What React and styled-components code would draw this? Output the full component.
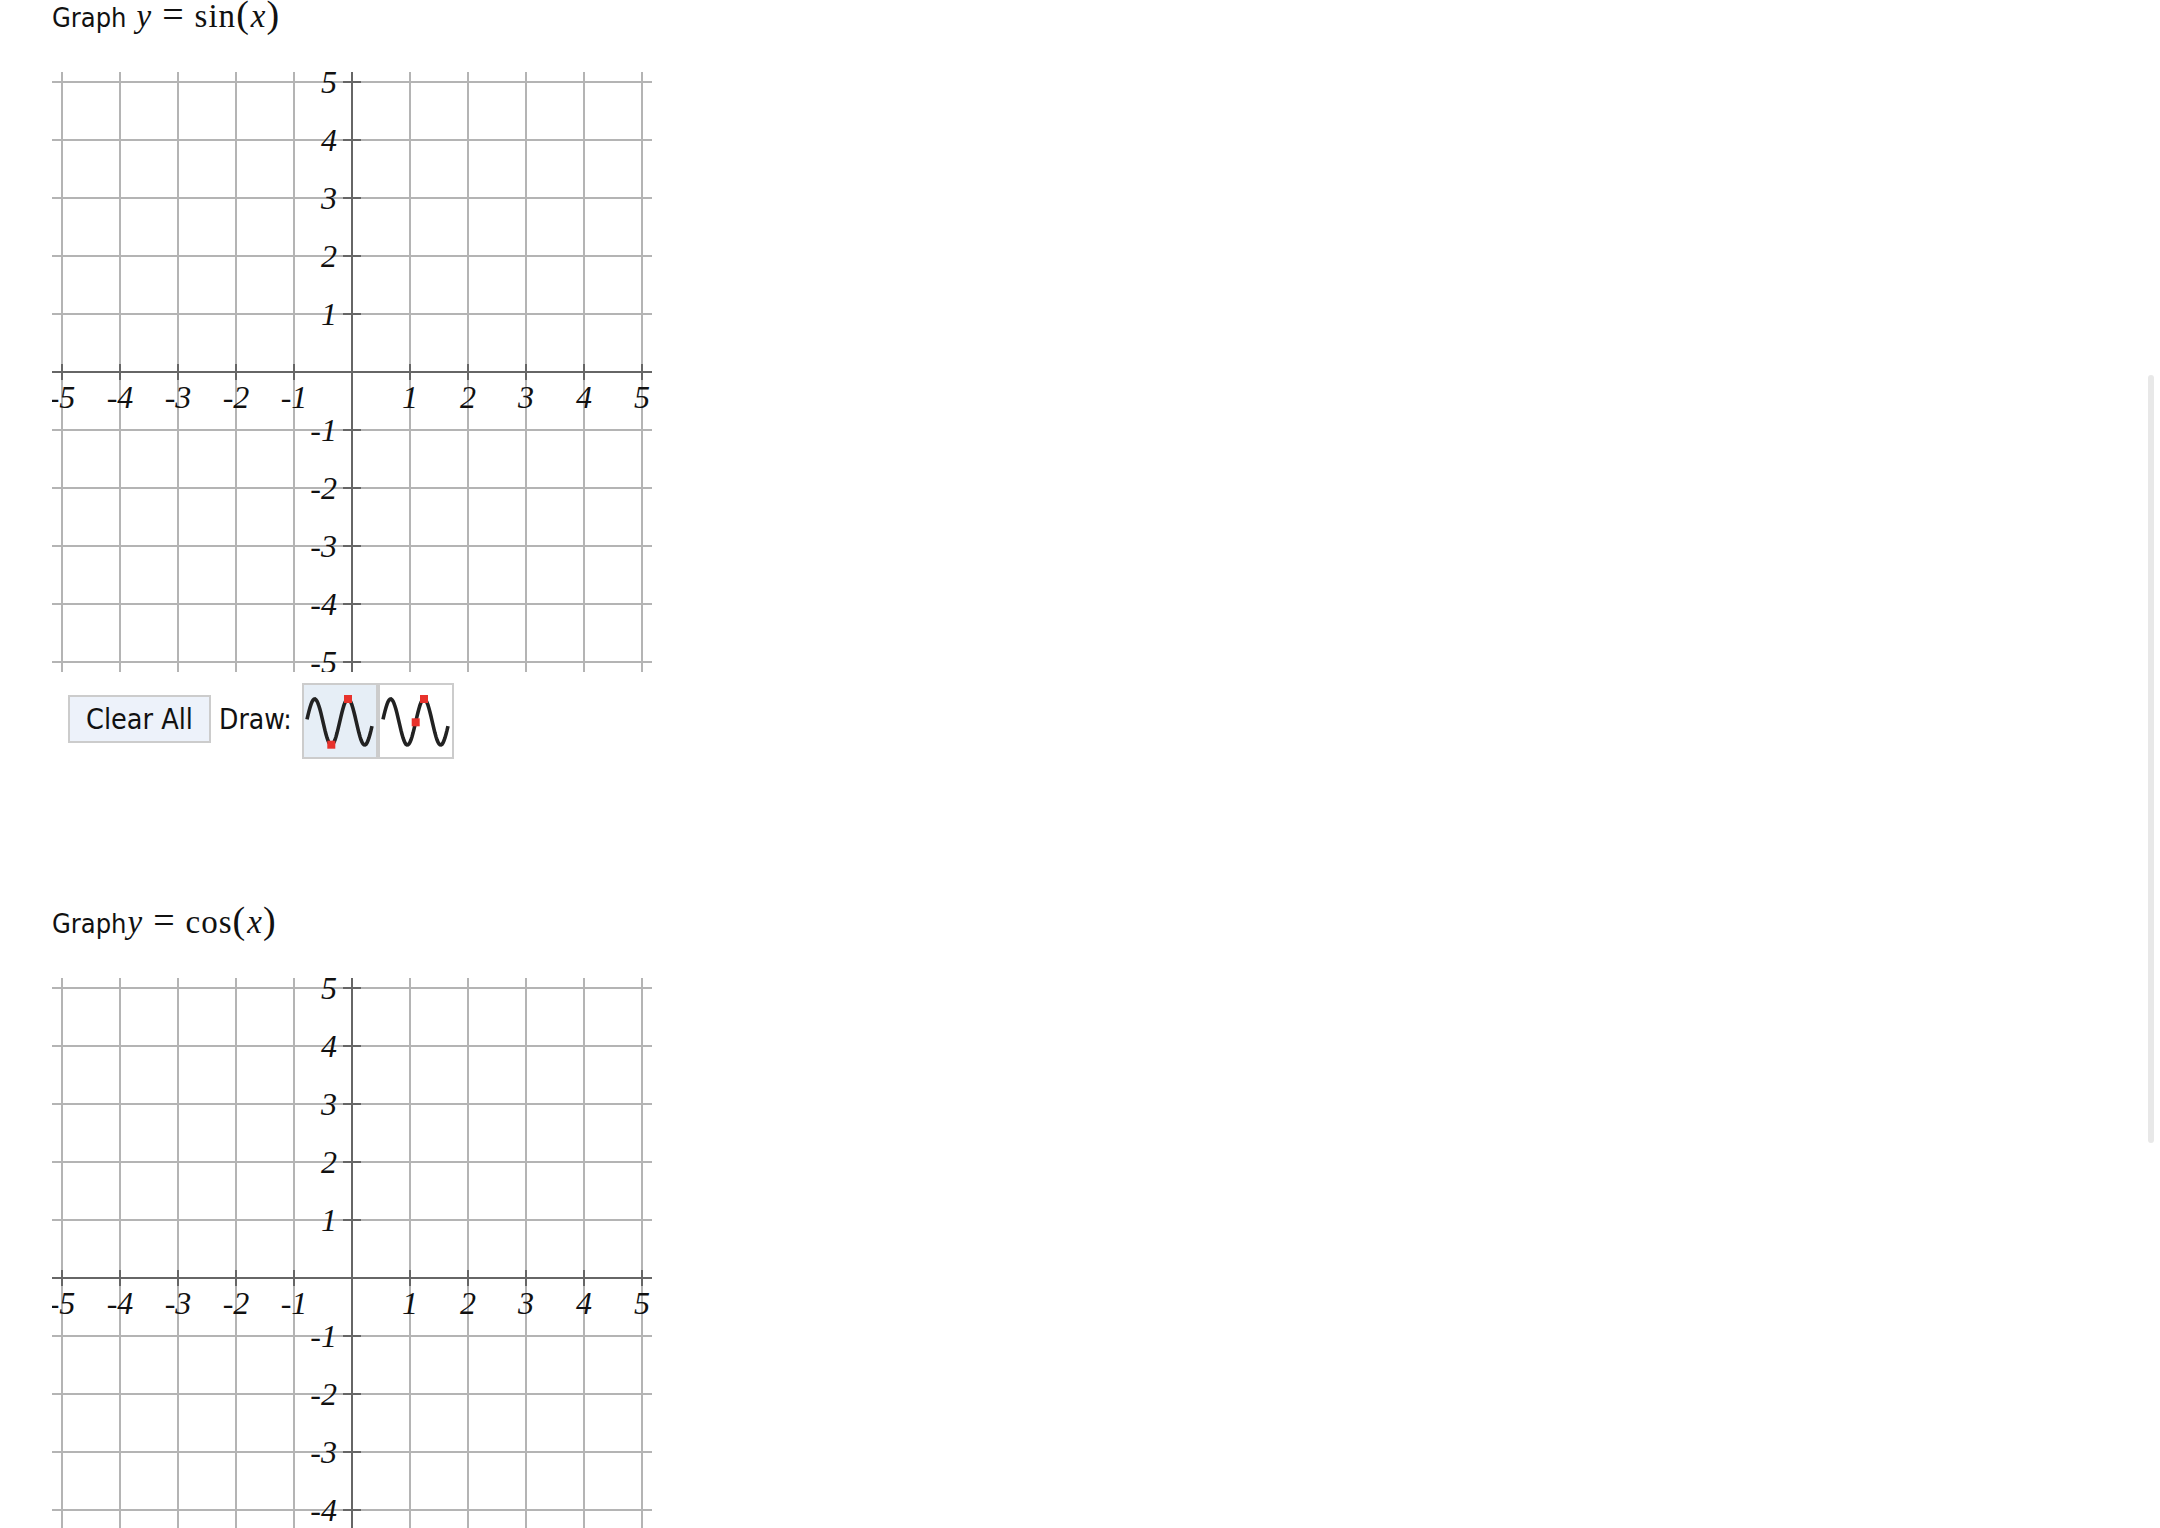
import React from 'react'
import styled, { createGlobalStyle } from 'styled-components'

const GlobalStyle = createGlobalStyle`
  html, body {
    margin: 0;
    height: 100%;
    overflow: hidden;
    background: #fff;
  }
`

const UNIT = 58
const ORIGIN = 300
const STEPS = [-5, -4, -3, -2, -1, 0, 1, 2, 3, 4, 5]
const TICKS = STEPS.filter((n) => n !== 0)

const buildWave = () => {
  const points = []
  for (let x = 5; x <= 70; x += 1) {
    const y = 39 - 23 * Math.cos((2 * Math.PI * (x - 12.7)) / 33.3)
    points.push(`${x},${y.toFixed(1)}`)
  }
  return points.join(' ')
}
const WAVE = buildWave()

const Graph = () => (
  <Plot width="600" height="600" viewBox="0 0 600 600">
    {STEPS.map((n) => {
      const pos = ORIGIN + n * UNIT
      if (n === 0) return null
      return (
        <g key={n}>
          <GridLine x1={pos} y1="0" x2={pos} y2="600" />
          <GridLine x1="0" y1={pos} x2="600" y2={pos} />
        </g>
      )
    })}
    <AxisLine x1="0" y1={ORIGIN} x2="600" y2={ORIGIN} />
    <AxisLine x1={ORIGIN} y1="0" x2={ORIGIN} y2="600" />
    {TICKS.map((n) => {
      const pos = ORIGIN + n * UNIT
      return (
        <g key={n}>
          <AxisLine x1={pos} y1={ORIGIN - 8} x2={pos} y2={ORIGIN + 8} />
          <AxisLine x1={ORIGIN - 9} y1={pos} x2={ORIGIN + 9} y2={pos} />
          <Tick x={pos} y={336} textAnchor="middle">{n}</Tick>
          <Tick x={285} y={ORIGIN - n * UNIT + 11} textAnchor="end">{n}</Tick>
        </g>
      )
    })}
  </Plot>
)

const ToolIcon = ({ marks }) => (
  <svg width="72" height="72" viewBox="2 2 72 72">
    <Wave points={WAVE} />
    {marks.map(([x, y]) => (
      <Mark key={x} x={x - 4} y={y - 4} width="8" height="8" />
    ))}
  </svg>
)

const Exercise = ({ title, tight, showTools }) => (
  <Section $height={showTools ? 906 : undefined}>
    <Title>
      <Word $tight={tight}>Graph</Word>
      {title}
    </Title>
    <Graph />
    {showTools && (
      <Tools>
        <ClearButton type="button">Clear All</ClearButton>
        <DrawLabel>Draw:</DrawLabel>
        <ToolGroup>
          <ToolButton type="button" $active>
            <ToolIcon marks={[[46, 16], [29.3, 61.7]]} />
          </ToolButton>
          <ToolButton type="button">
            <ToolIcon marks={[[46, 16], [37.7, 39.3]]} />
          </ToolButton>
        </ToolGroup>
      </Tools>
    )}
  </Section>
)

const App = () => (
  <Page>
    <GlobalStyle />
    <Exercise
      showTools
      title={
        <Formula>
          <Var>y</Var>
          <Rel>=</Rel>
          <Fn>sin</Fn>
          <Paren>(</Paren>
          <Arg>x</Arg>
          <Paren>)</Paren>
        </Formula>
      }
    />
    <Exercise
      tight
      title={
        <Formula>
          <Var>y</Var>
          <Rel>=</Rel>
          <Fn>cos</Fn>
          <Paren>(</Paren>
          <Arg>x</Arg>
          <Paren>)</Paren>
        </Formula>
      }
    />
    <ScrollThumb />
  </Page>
)

const Page = styled.div`
  position: relative;
  height: 1528px;
  overflow: hidden;
  padding-left: 52px;
  background: #fff;
  font-family: 'DejaVu Sans Condensed', 'DejaVu Sans', sans-serif;
  color: #111;
`

const Section = styled.section`
  height: ${(p) => (p.$height ? `${p.$height}px` : 'auto')};
`

const Title = styled.div`
  display: flex;
  align-items: baseline;
  height: 72px;
  font-size: 27px;
  line-height: 28px;
`

const Word = styled.span`
  margin-right: ${(p) => (p.$tight ? '1px' : '10px')};
`

const Formula = styled.span`
  display: inline-flex;
  align-items: baseline;
  font-family: 'Liberation Serif', serif;
  font-size: 33px;
`

const Var = styled.i`
  font-style: italic;
`

const Arg = styled(Var)`
  margin: 0 1px 0 2px;
`

const Rel = styled.span`
  margin: 0 11px;
  font-size: 38px;
`

const Fn = styled.span`
  letter-spacing: 1px;
`

const Paren = styled.span`
  font-size: 38px;
`

const Plot = styled.svg`
  display: block;
  overflow: hidden;
`

const GridLine = styled.line`
  stroke: #b4b4b4;
  stroke-width: 2;
`

const AxisLine = styled.line`
  stroke: #666;
  stroke-width: 2;
`

const Tick = styled.text`
  font-family: 'Liberation Serif', serif;
  font-style: italic;
  font-size: 32px;
  fill: #111;
`

const Tools = styled.div`
  display: flex;
  align-items: center;
  height: 76px;
  margin-top: 11px;
  padding-left: 16px;
`

const ClearButton = styled.button`
  box-sizing: border-box;
  width: 143px;
  height: 48px;
  margin-bottom: 4px;
  padding: 0;
  border: 2px solid #ccc;
  border-radius: 0;
  background: #edf2fa;
  color: #111;
  font: inherit;
  font-size: 28.5px;
`

const DrawLabel = styled.span`
  margin: 0 0 4px 8px;
  font-size: 28px;
`

const ToolGroup = styled.div`
  display: flex;
  margin-left: 10px;
`

const ToolButton = styled.button`
  box-sizing: border-box;
  display: flex;
  width: 76px;
  height: 76px;
  padding: 0;
  border: 2px solid #ccc;
  border-radius: 0;
  background: ${(p) => (p.$active ? '#e6eef6' : '#fff')};

  svg {
    display: block;
    filter: blur(0.4px);
  }
`

const Wave = styled.polyline`
  fill: none;
  stroke: #222;
  stroke-width: 3.6;
`

const Mark = styled.rect`
  fill: #e8322c;
`

const ScrollThumb = styled.div`
  position: absolute;
  top: 375px;
  left: 2148px;
  width: 6px;
  height: 768px;
  border-radius: 3px;
  background: #e8e8e8;
`

export default App
